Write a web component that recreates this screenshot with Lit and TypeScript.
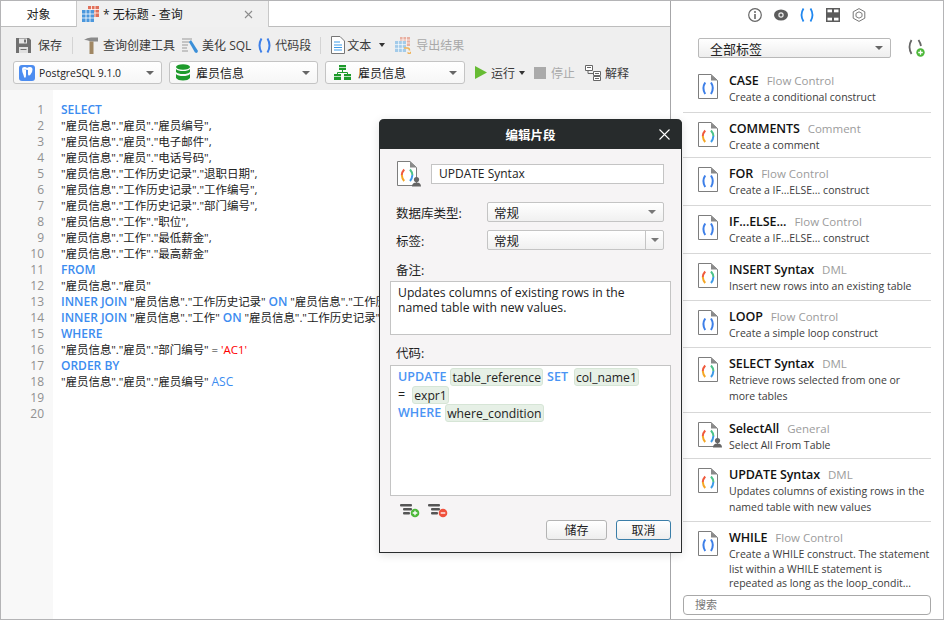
import { LitElement, html, css, svg } from "lit";
import { customElement } from "lit/decorators.js";

const bracketsBlue = svg`<path d="M7.200 8.500Q3.600 14.200 7.200 20" fill="none" stroke="#3d7fe8" stroke-width="2"/><path d="M13 8.500Q16.600 14.200 13 20" fill="none" stroke="#3d7fe8" stroke-width="2"/>`;
const bracketsColor = svg`<path d="M7.200 8.500Q5 11 4.800 14" fill="none" stroke="#ef5a3c" stroke-width="2"/><path d="M4.800 14Q5 17.500 7.200 20" fill="none" stroke="#f5a623" stroke-width="2"/><path d="M13 8.500Q15.200 11 15.400 14" fill="none" stroke="#4cc38a" stroke-width="2"/><path d="M15.400 14Q15.200 17.500 13 20" fill="none" stroke="#3d9be8" stroke-width="2"/>`;

function fileIcon(kind: string) {
  const user = kind === "user";
  return html`<svg class="fileicon" width="24" height="26" viewBox="0 0 24 26">
    <path d="M.5.5H13L19.500 6.500V24.500H.5Z" fill="#fff" stroke="#7d7d7d"/>
    <path d="M13 .5V6.500H19.500Z" fill="#8a8a8a"/>
    ${kind === "blue" ? bracketsBlue : bracketsColor}
    ${user
      ? svg`<circle cx="19.500" cy="18.500" r="2.600" fill="#666"/><path d="M15 25.500Q15 21.500 19.500 21.500T24 25.500Z" fill="#666"/>`
      : ""}
  </svg>`;
}

const caret = html`<span class="caret"></span>`;

interface Snip { t: string; c: string; d: string; k: string; h: number; }
const snippets: Snip[] = [
  { t: "CASE", c: "Flow Control", d: "Create a conditional construct", k: "blue", h: 48 },
  { t: "COMMENTS", c: "Comment", d: "Create a comment", k: "color", h: 45 },
  { t: "FOR", c: "Flow Control", d: "Create a IF...ELSE... construct", k: "blue", h: 48 },
  { t: "IF...ELSE...", c: "Flow Control", d: "Create a IF...ELSE... construct", k: "blue", h: 48 },
  { t: "INSERT Syntax", c: "DML", d: "Insert new rows into an existing table", k: "color", h: 47 },
  { t: "LOOP", c: "Flow Control", d: "Create a simple loop construct", k: "blue", h: 47 },
  { t: "SELECT Syntax", c: "DML", d: "Retrieve rows selected from one or more tables", k: "color", h: 65 },
  { t: "SelectAll", c: "General", d: "Select All From Table", k: "user", h: 46 },
  { t: "UPDATE Syntax", c: "DML", d: "Updates columns of existing rows in the named table with new values", k: "color", h: 63 },
];

const Q = '"雇员信息"';
type Seg = string | { k: string } | { s: string } | { a: string };
const K = (k: string) => ({ k });
const codeLines: Seg[][] = [
  [K("SELECT")],
  [`${Q}."雇员"."雇员编号",`],
  [`${Q}."雇员"."电子邮件",`],
  [`${Q}."雇员"."电话号码",`],
  [`${Q}."工作历史记录"."退职日期",`],
  [`${Q}."工作历史记录"."工作编号",`],
  [`${Q}."工作历史记录"."部门编号",`],
  [`${Q}."工作"."职位",`],
  [`${Q}."工作"."最低薪金",`],
  [`${Q}."工作"."最高薪金"`],
  [K("FROM")],
  [`${Q}."雇员"`],
  [K("INNER JOIN"), ` ${Q}."工作历史记录" `, K("ON"), ` ${Q}."工作历史记录"."雇员编号"`],
  [K("INNER JOIN"), ` ${Q}."工作" `, K("ON"), ` ${Q}."工作历史记录"."工作编号"`],
  [K("WHERE")],
  [`${Q}."雇员"."部门编号" = `, { s: "'AC1'" }],
  [K("ORDER BY")],
  [`${Q}."雇员"."雇员编号" `, { a: "ASC" }],
  [],
  [],
];

@customElement("app-root")
export class AppRoot extends LitElement {
  static styles = css`
    :host {
      display: block;
      width: 944px;
      height: 620px;
      font-family: "Open Sans", "Noto Sans CJK SC", sans-serif;
      font-size: 12px;
      color: #222;
    }
    * { box-sizing: border-box; }
    svg { display: block; flex: none; }
    .win {
      position: relative;
      width: 944px;
      height: 620px;
      display: flex;
      border: 1px solid #b4b4b6;
      background: #fff;
      overflow: hidden;
    }
    .left { width: 670px; flex: none; display: flex; flex-direction: column; border-right: 1px solid #a6a6a8; }
    .tabs { height: 26px; flex: none; display: flex; border-bottom: 1px solid #bdbdbd; }
    .tab { display: flex; align-items: center; height: 26px; }
    .tab.obj { width: 76px; justify-content: center; border-right: 1px solid #c8c8c8; }
    .tab.query {
      width: 192px; background: #f0f0f0; border-right: 1px solid #c8c8c8; padding: 0 15px 0 5px; gap: 4px;
    }
    .tab.query .x { margin-left: auto; color: #8a8a8a; }
    .toolbar { height: 63px; flex: none; background: #efefef; padding: 6px 0 0 12px; }
    .row { display: flex; align-items: center; }
    .r1 { height: 24px; color: #3a3a3a; }
    .r2 { height: 23px; margin-top: 4px; }
    .tool { display: flex; align-items: center; white-space: nowrap; }
    .sep { width: 1px; height: 17px; background: #d4d4d4; }
    .dim { color: #a9a9a9; }
    .caret { width: 0; height: 0; border: 3px solid transparent; border-top: 4px solid #333; border-bottom: 0; flex: none; }
    .sel {
      height: 23px;
      display: flex;
      align-items: center;
      border: 1px solid #c4c4c4;
      border-radius: 3px;
      background: linear-gradient(#fff, #f6f6f6);
      padding: 0 5px 0 5px;
      color: #222;
    }
    .sel .caret { margin-left: auto; border-width: 4px; border-top: 4px solid #666; border-bottom: 0; }
    .pg { font-size: 10.4px; }
    .editor { flex: 1; display: flex; min-height: 0; padding-top: 12px; background: linear-gradient(90deg, #f8f8f8 52px, #fff 52px); }
    .nums { width: 52px; flex: none; padding-right: 9px; text-align: right; color: #909090; }
    .nums div, .code div { height: 16px; line-height: 16px; white-space: nowrap; }
    .code { padding-left: 8px; color: #222; font-size: 11.5px; letter-spacing: -0.05px; }
    .kw { color: #3c8cf0; }
    .code .kw { font-weight: 600; font-size: 12px; letter-spacing: 0; }
    .code .asc { color: #3c8cf0; font-size: 12px; }
    .str { color: #f00; }

    .right { flex: 1; min-width: 0; display: flex; flex-direction: column; }
    .rtop { height: 37px; flex: none; display: flex; justify-content: center; gap: 12px; padding-top: 7px; }
    .rfilter { height: 20px; flex: none; display: flex; align-items: center; padding-left: 27px; gap: 16px; }
    .rfilter .sel { width: 193px; height: 20px; padding-left: 11px; padding-right: 7px; font-size: 13px; background: linear-gradient(#fff, #eee); border-color: #b9b9b9; border-radius: 2px; }
    .list { flex: 1; min-height: 0; overflow: hidden; padding: 7px 12px 0 12px; }
    .item { display: flex; border-bottom: 1px solid #d7d7d7; padding: 8px 0 0 15px; gap: 7px; }
    .item:last-child { border-bottom: 0; }
    .item .fileicon { margin-top: 1px; }
    .info { min-width: 0; flex: 1; }
    .ttl { height: 16px; line-height: 16px; font-size: 12.5px; font-weight: 600; color: #111; white-space: nowrap; letter-spacing: -0.1px; }
    .ttl span { font-weight: 400; font-size: 11.5px; color: #9c9c9c; margin-left: 8px; letter-spacing: 0; }
    .desc { font-size: 10.5px; line-height: 16px; color: #3c3c3c; max-width: 198px; }
    .item.last .desc { line-height: 14.5px; white-space: nowrap; margin-top: 1px; max-width: none; }
    .search { flex: none; height: 20px; margin: 0 12px 4px 12px; border: 1px solid #a8a8a8; border-radius: 4px; padding-left: 11px; line-height: 18px; font-size: 11px; color: #777; background: #fff; }

    .modal {
      position: absolute;
      left: 378px;
      top: 118px;
      width: 303px;
      height: 434px;
      background: #f6f4f5;
      border: 1px solid #2a2d2e;
      border-top: 0;
      border-radius: 5px 5px 0 0;
      box-shadow: 0 2px 10px rgba(0,0,0,.12);
      display: flex;
      flex-direction: column;
    }
    .mtitle {
      height: 30px; flex: none; background: #272b2c; color: #fff; font-weight: 600; font-size: 12.5px;
      border-radius: 5px 5px 0 0; margin: 0 -1px;
      display: flex; align-items: center; justify-content: center; position: relative;
    }
    .mtitle svg { position: absolute; right: 12px; top: 10px; }
    .mbody { flex: 1; display: flex; flex-direction: column; padding: 0 10px; }
    .namerow { display: flex; align-items: center; margin-top: 9px; height: 32px; padding-left: 7px; gap: 10px; }
    .input { height: 20px; width: 233px; border: 1px solid #c4c4c4; background: #fff; padding-left: 7px; line-height: 18px; font-size: 12px; white-space: nowrap; }
    .frow { display: flex; align-items: center; padding-left: 6px; height: 20px; }
    .frow .lbl { width: 91px; font-size: 12.5px; }
    .frow .sel { width: 177px; height: 20px; border-radius: 2px; padding: 0 7px 0 6px; font-size: 12.5px; background: linear-gradient(#fff, #f0f0f0); }
    .frow .sel .caret { border-top-color: #777; }
    .combo { padding-right: 0 !important; }
    .combo i { margin-left: auto; width: 18px; height: 18px; border-left: 1px solid #c4c4c4; display: flex; align-items: center; justify-content: center; }
    .combo i .caret { margin: 0; }
    .lbl2 { padding-left: 6px; font-size: 12.5px; height: 16px; line-height: 16px; }
    .area { border: 1px solid #c4c4c4; background: #fff; width: 281px; flex: none; }
    .note { height: 54px; padding: 3px 7px; line-height: 15px; font-size: 12.2px; color: #222; }
    .codebox { height: 131px; padding: 2px 7px; line-height: 18px; font-size: 12.5px; }
    .codebox div { height: 18px; white-space: nowrap; display: flex; align-items: flex-start; }
    .tok { display: inline-block; height: 18px; line-height: 17px; font-size: 12.2px; background: #e6f0e6; border: 1px solid #d6e5d6; border-radius: 3px; padding: 0 1px; margin: 0 4px; }
    .codebox .kw { font-weight: 600; color: #4a94f4; }
    .micons { display: flex; gap: 8px; height: 16px; margin-top: 7px; padding-left: 10px; }
    .btns { display: flex; justify-content: flex-end; gap: 9px; height: 20px; margin-top: 1px; }
    .btn { width: 61px; height: 20px; border: 1px solid #b4b4b4; border-radius: 3px; display: flex; align-items: center; justify-content: center; background: linear-gradient(#fff, #eee); font-size: 12px; }
    .btn.def { width: 55px; border-color: #3b7ea8; }
    .m2 { margin-left: 2px; }
    .m3 { margin-left: 3px; }
    .m4 { margin-left: 4px; }
    .m5 { margin-left: 5px; }
    .m6 { margin-left: 6px; }
    .m7 { margin-left: 7px; }
    .m8 { margin-left: 8px; }
    .m9 { margin-left: 9px; }
    .m10 { margin-left: 10px; }
    .m11 { margin-left: 11px; }
    .ink { color: #3a3a3a; }
    .s1 { width: 149px; padding-right: 7px; }
    .s2 { width: 149px; padding-right: 7px; }
    .s3 { width: 140px; padding-left: 8px; padding-right: 7px; }
    .ir4 { margin-right: 4px; }
    .ir5 { margin-right: 5px; }
    .ir7 { margin-right: 7px; }
    .mt2 { margin-top: 2px; }
    .mt3 { margin-top: 3px; }
    .mt8 { margin-top: 8px; }
    .mt11 { margin-top: 11px; }
    .mt12 { margin-top: 12px; }
    .mt13 { margin-top: 13px; }
    .tok.m6 { margin-left: 6px; }
    .tok.m7 { margin-left: 7px; }
  `;

  render() {
    return html`<div class="win">
      <div class="left">
        <div class="tabs">
          <div class="tab obj">对象</div>
          <div class="tab query">
            <svg width="17" height="16" viewBox="0 0 17 16">
              <rect x="6" y="0" width="11" height="11" fill="#e0705a"/>
              <path d="M9.500 0v11M13 0v11M6 3.500h11M6 7h11" stroke="#fff" stroke-width=".8"/>
              <rect x="0" y="4" width="12" height="12" fill="#4b97dc"/>
              <path d="M4 4v12M8 4v12M0 8h12M0 12h12" stroke="#fff" stroke-width=".8"/>
            </svg>
            <span>* 无标题 - 查询</span>
            <span class="x"><svg width="9" height="9" viewBox="0 0 9 9"><path d="M1 1l7 7M8 1l-7 7" stroke="#8c8c8c" stroke-width="1.100"/></svg></span>
          </div>
        </div>
        <div class="toolbar">
          <div class="row r1">
            <div class="tool m2">
              <svg width="17" height="17" viewBox="0 0 17 17"><path d="M1 1h13l2 2v13H1z" fill="#707070"/><rect x="4" y="1.500" width="8" height="5" fill="#e6e6e6"/><rect x="9" y="2.500" width="2" height="3" fill="#707070"/><rect x="4" y="10" width="9" height="6" fill="#e0e0e0"/><path d="M5.500 12.500h6" stroke="#707070"/></svg>
              <span class="m6">保存</span>
            </div>
            <div class="sep m10"></div>
            <div class="tool m11">
              <svg width="15" height="17" viewBox="0 0 15 17"><path d="M0 3Q3 .5 7 .5h7v4H9.500v0h-4V4Q2 2.500 0 3z" fill="#8a8a8a"/><rect x="5.500" y="4.500" width="4" height="12.500" fill="#a08763"/></svg>
              <span class="m4">查询创建工具</span>
            </div>
            <div class="tool m6">
              <svg width="19" height="17" viewBox="0 0 19 17"><path d="M1 2h10M1 5h8M1 8h6M1 11h5M1 14h6" stroke="#999"/><path d="M8 5l2-2 7 11-1 2-2-.5z" fill="#3a8fd8"/></svg>
              <span class="m2">美化 SQL</span>
            </div>
            <div class="tool m6">
              <svg width="15" height="17" viewBox="0 0 15 17"><path d="M4.500 1.500Q.5 8.500 4.500 15.500M10.500 1.500Q14.500 8.500 10.500 15.500" fill="none" stroke="#3d7fe8" stroke-width="2"/></svg>
              <span class="m3">代码段</span>
            </div>
            <div class="sep m9"></div>
            <div class="tool m10">
              <svg width="14" height="18" viewBox="0 0 14 18"><path d="M.5.5H9L13.500 5v12.500H.5z" fill="#fff" stroke="#777"/><path d="M3 6h6M3 9h8M3 11.500h8M3 14h8" stroke="#3d9be8"/></svg>
              <span class="m2">文本</span>
              <span class="caret m8"></span>
            </div>
            <div class="tool dim m10">
              <svg width="16" height="17" viewBox="0 0 16 17">
                <rect x="5" y="0" width="10" height="9" fill="#e8b0a2"/>
                <path d="M8 0v9M11.500 0v9M5 3h10M5 6h10" stroke="#fff" stroke-width=".7"/>
                <rect x="0" y="4" width="11" height="11" fill="#a3cbe9"/>
                <path d="M3.600 4v11M7.300 4v11M0 7.600h11M0 11.300h11" stroke="#fff" stroke-width=".7"/>
                <path d="M9 11h3.500q2 0 2 2.500M12.500 15.500l2 1.500 1.500-2" fill="none" stroke="#efb35a" stroke-width="1.500"/>
              </svg>
              <span class="m5">导出结果</span>
            </div>
          </div>
          <div class="row r2">
            <div class="sel s1">
              <svg class="ir4" width="16" height="16" viewBox="0 0 16 16"><rect width="16" height="16" rx="3" fill="#4d8df0"/><path d="M3 4q0-2 2.500-2 2 0 2.500 1 1-1 3-1 2.500 0 2.500 2.500 0 3-2 5-.5 1-1.500 1T9 9V5M7 5v5q0 3-1 3T4.500 10Q3 7 3 4z" fill="#fff"/></svg>
              <span class="pg">PostgreSQL 9.1.0</span>${caret}
            </div>
            <div class="sel s2 m7">
              <svg class="ir5" width="16" height="17" viewBox="0 0 16 17"><ellipse cx="8" cy="3" rx="7" ry="2.800" fill="#1d9a2b"/><path d="M1 5q2 2 7 2t7-2v3q-2 2-7 2T1 8zM1 10q2 2 7 2t7-2v4q-2 2.500-7 2.500T1 14z" fill="#1d9a2b"/></svg>
              <span>雇员信息</span>${caret}
            </div>
            <div class="sel s3 m7">
              <svg class="ir7" width="17" height="15" viewBox="0 0 17 15"><rect x="5" y="0" width="7" height="5" fill="#1d9a2b"/><rect x="0" y="9" width="7" height="6" fill="#1d9a2b"/><rect x="10" y="9" width="7" height="6" fill="#1d9a2b"/><path d="M8.500 5v2.500M3.500 9V7.500h10V9" fill="none" stroke="#1d9a2b"/><path d="M5 2.500h7M0 11.500h7M10 11.500h7" stroke="#fff" stroke-width=".7"/></svg>
              <span>雇员信息</span>${caret}
            </div>
            <div class="tool m10">
              <svg width="12" height="13" viewBox="0 0 12 13"><path d="M0 0l12 6.500L0 13z" fill="#66bb33"/></svg>
              <span class="m4 ink">运行</span>
              <span class="caret m4"></span>
            </div>
            <div class="tool dim m9">
              <svg width="12" height="12" viewBox="0 0 12 12"><rect width="12" height="12" fill="#aaa"/></svg>
              <span class="m5">停止</span>
            </div>
            <div class="tool m10">
              <svg width="16" height="16" viewBox="0 0 16 16"><path d="M.5.5h7v5h-7zM8.500 6.500h7v4h-7zM8.500 11.500h7v4h-7z" fill="#fff" stroke="#666"/><path d="M2 2.500h4M10 8.500h4M10 13.500h4M3 5.500v3h5.500" fill="none" stroke="#666"/></svg>
              <span class="m4 ink">解释</span>
            </div>
          </div>
        </div>
        <div class="editor">
          <div class="nums">${codeLines.map((_, i) => html`<div>${i + 1}</div>`)}</div>
          <div class="code">
            ${codeLines.map(
              (l) => html`<div>${l.map((s) =>
                typeof s === "string"
                  ? s
                  : "k" in s
                  ? html`<span class="kw">${s.k}</span>`
                  : "a" in s
                  ? html`<span class="asc">${s.a}</span>`
                  : html`<span class="str">${s.s}</span>`
              )}</div>`
            )}
          </div>
        </div>
      </div>

      <div class="right">
        <div class="rtop">
          <svg width="14" height="14" viewBox="0 0 14 14"><circle cx="7" cy="7" r="6.300" fill="none" stroke="#666" stroke-width="1.200"/><circle cx="7" cy="4" r="1" fill="#666"/><rect x="6.200" y="6" width="1.600" height="5" fill="#666"/></svg>
          <svg width="14" height="14" viewBox="0 0 14 14"><ellipse cx="7" cy="7" rx="7" ry="5.500" fill="#5c5c5c"/><circle cx="7" cy="7" r="2.700" fill="#eee"/><circle cx="7" cy="7" r="1.500" fill="#5c5c5c"/></svg>
          <svg width="14" height="14" viewBox="0 0 14 14"><path d="M3.500.5Q-.5 7 3.500 13.500M10.500.5Q14.500 7 10.500 13.500" fill="none" stroke="#1f87f0" stroke-width="1.800"/></svg>
          <svg width="14" height="14" viewBox="0 0 14 14"><rect width="14" height="14" fill="#5c5c5c"/><rect x="1.500" y="1.500" width="4.500" height="2.800" fill="#fff"/><rect x="8" y="1.500" width="4.500" height="2.800" fill="#fff"/><rect x="1.500" y="9.700" width="4.500" height="2.800" fill="#fff"/><rect x="8" y="9.700" width="4.500" height="2.800" fill="#fff"/></svg>
          <svg width="14" height="14" viewBox="0 0 14 14"><path d="M7 .6l5.800 3.200v6.400L7 13.400l-5.800-3.200V3.800z" fill="none" stroke="#777"/><path d="M7 3.800l3 1.600v3.200l-3 1.600-3-1.600V5.400z" fill="none" stroke="#777"/></svg>
        </div>
        <div class="rfilter">
          <div class="sel"><span>全部标签</span>${caret}</div>
          <svg width="18" height="18" viewBox="0 0 18 18"><path d="M4.500 1Q.5 8 4.500 15M11.500 1q2 3 2.500 6" fill="none" stroke="#666" stroke-width="1.800"/><circle cx="13.500" cy="13.500" r="4.200" fill="#4db83a"/><path d="M11.200 13.500h4.600M13.500 11.200v4.600" stroke="#fff" stroke-width="1.300"/></svg>
        </div>
        <div class="list">
          ${snippets.map(
            (s) => html`<div class="item" style="height:${s.h}px">
              ${fileIcon(s.k)}
              <div class="info">
                <div class="ttl">${s.t}<span>${s.c}</span></div>
                <div class="desc">${s.d}</div>
              </div>
            </div>`
          )}
          <div class="item last">
            ${fileIcon("blue")}
            <div class="info">
              <div class="ttl">WHILE<span>Flow Control</span></div>
              <div class="desc">Create a WHILE construct. The statement<br />list within a WHILE statement is<br />repeated as long as the loop_condit...</div>
            </div>
          </div>
        </div>
        <div class="search">搜索</div>
      </div>

      <div class="modal">
        <div class="mtitle">编辑片段
          <svg width="11" height="11" viewBox="0 0 11 11"><path d="M.5.5l10 10M10.500.5l-10 10" stroke="#fff" stroke-width="1.100"/></svg>
        </div>
        <div class="mbody">
          <div class="namerow">
            ${fileIcon("user")}
            <div class="input">UPDATE Syntax</div>
          </div>
          <div class="frow mt12"><div class="lbl">数据库类型:</div><div class="sel"><span>常规</span>${caret}</div></div>
          <div class="frow mt8"><div class="lbl">标签:</div><div class="sel combo"><span>常规</span><i>${caret}</i></div></div>
          <div class="lbl2 mt13">备注:</div>
          <div class="area note mt2">Updates columns of existing rows in the<br />named table with new values.</div>
          <div class="lbl2 mt11">代码:</div>
          <div class="area codebox mt3">
            <div><span class="kw">UPDATE</span><span class="tok">table_reference</span><span class="kw">SET</span><span class="tok m6">col_name1</span></div>
            <div>=<span class="tok m7">expr1</span></div>
            <div><span class="kw">WHERE</span><span class="tok">where_condition</span></div>
          </div>
          <div class="micons">
            <svg width="20" height="15" viewBox="0 0 20 15"><rect x="0" y="1" width="12" height="2.500" rx="1" fill="#555"/><rect x="3" y="5" width="9" height="2.500" rx="1" fill="#555"/><rect x="3" y="9" width="7" height="2.500" rx="1" fill="#555"/><circle cx="15" cy="10" r="4.300" fill="#4db83a"/><path d="M12.700 10h4.600M15 7.700v4.600" stroke="#fff" stroke-width="1.300"/></svg>
            <svg width="20" height="15" viewBox="0 0 20 15"><rect x="0" y="1" width="12" height="2.500" rx="1" fill="#555"/><rect x="3" y="5" width="9" height="2.500" rx="1" fill="#555"/><rect x="3" y="9" width="7" height="2.500" rx="1" fill="#555"/><circle cx="15" cy="10" r="4.300" fill="#f0503c"/><path d="M12.700 10h4.600" stroke="#fff" stroke-width="1.300"/></svg>
          </div>
          <div class="btns"><div class="btn">储存</div><div class="btn def">取消</div></div>
        </div>
      </div>
    </div>`;
  }
}
